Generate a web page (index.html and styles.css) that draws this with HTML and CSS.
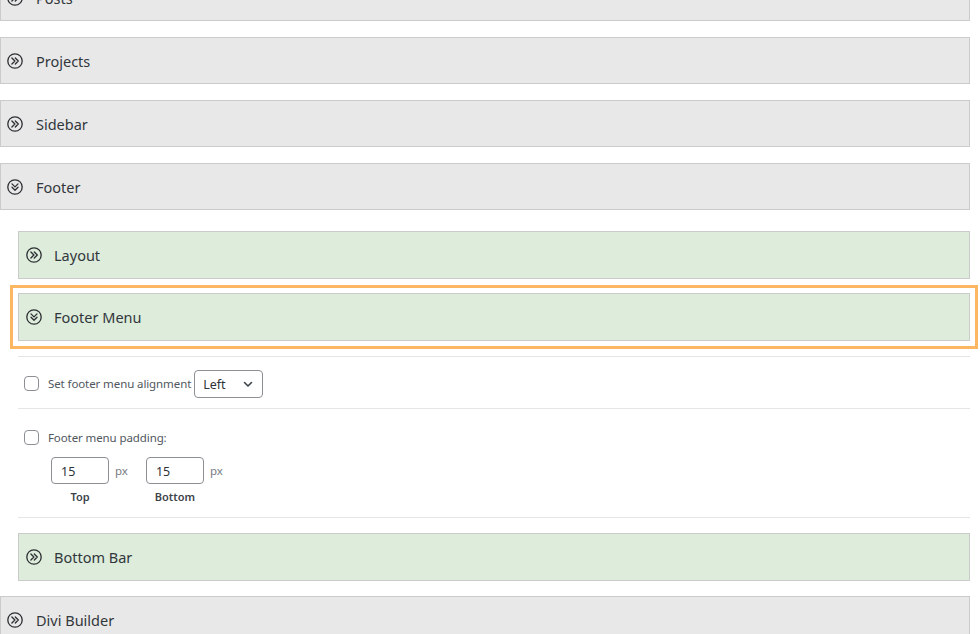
FILE: index.html
```html
<!DOCTYPE html>
<html>
<head>
<meta charset="utf-8">
<link rel="stylesheet" href="styles.css">
</head>
<body>
<div class="wrap">
  <div class="box gray"><svg class="ico" viewBox="0 0 18 18"><circle cx="9" cy="9" r="7.2"/><path d="M5.9 6 8.9 9 5.9 12M9.3 6 12.3 9 9.3 12"/></svg><span>Posts</span></div>
  <div class="box gray"><svg class="ico" viewBox="0 0 18 18"><circle cx="9" cy="9" r="7.2"/><path d="M5.9 6 8.9 9 5.9 12M9.3 6 12.3 9 9.3 12"/></svg><span>Projects</span></div>
  <div class="box gray"><svg class="ico" viewBox="0 0 18 18"><circle cx="9" cy="9" r="7.2"/><path d="M5.9 6 8.9 9 5.9 12M9.3 6 12.3 9 9.3 12"/></svg><span>Sidebar</span></div>
  <div class="box gray open"><svg class="ico" viewBox="0 0 18 18"><circle cx="9" cy="9" r="7.2"/><path d="M6 5.9 9 8.9 12 5.9M6 9.3 9 12.3 12 9.3"/></svg><span>Footer</span></div>
  <div class="children">
    <div class="box green"><svg class="ico" viewBox="0 0 18 18"><circle cx="9" cy="9" r="7.2"/><path d="M5.9 6 8.9 9 5.9 12M9.3 6 12.3 9 9.3 12"/></svg><span>Layout</span></div>
    <div class="box green focus"><svg class="ico" viewBox="0 0 18 18"><circle cx="9" cy="9" r="7.2"/><path d="M6 5.9 9 8.9 12 5.9M6 9.3 9 12.3 12 9.3"/></svg><span>Footer Menu</span></div>
    <div class="options">
      <div class="opt row1">
        <input type="checkbox" class="cb">
        <span class="lbl">Set footer menu alignment</span>
        <div class="selwrap">
          <select class="sel"><option>Left</option></select>
          <svg class="chev" viewBox="0 0 12 12"><path d="M2.5 4.5 6 8 9.5 4.5"/></svg>
        </div>
      </div>
      <div class="opt row2">
        <div class="line">
          <input type="checkbox" class="cb">
          <span class="lbl">Footer menu padding:</span>
        </div>
        <div class="fields">
          <div class="field">
            <div class="inrow"><input type="text" class="num" value="15"><span class="unit">px</span></div>
            <div class="cap">Top</div>
          </div>
          <div class="field">
            <div class="inrow"><input type="text" class="num" value="15"><span class="unit">px</span></div>
            <div class="cap">Bottom</div>
          </div>
        </div>
      </div>
    </div>
    <div class="box green last"><svg class="ico" viewBox="0 0 18 18"><circle cx="9" cy="9" r="7.2"/><path d="M5.9 6 8.9 9 5.9 12M9.3 6 12.3 9 9.3 12"/></svg><span>Bottom Bar</span></div>
  </div>
  <div class="box gray"><svg class="ico" viewBox="0 0 18 18"><circle cx="9" cy="9" r="7.2"/><path d="M5.9 6 8.9 9 5.9 12M9.3 6 12.3 9 9.3 12"/></svg><span>Divi Builder</span></div>
</div>
</body>
</html>
```

FILE: styles.css
```css
html, body {
  margin: 0;
  padding: 0;
  background: #ffffff;
  overflow: hidden;
}
body {
  font-family: "Noto Sans", "Open Sans", "Liberation Sans", sans-serif;
  color: #32373c;
}
.wrap {
  width: 970px;
  margin-top: -26px;
}
.box {
  box-sizing: border-box;
  height: 47px;
  border: 1px solid #cbcbcb;
  display: flex;
  align-items: center;
  padding-left: 5px;
  margin-bottom: 16px;
  font-size: 14.5px;
  color: #32373c;
}
.box span {
  margin-left: 12px;
}
.gray {
  background: #e8e8e8;
}
.green {
  background: #ddecdb;
  height: 48px;
  margin-bottom: 14px;
}
.box.open {
  margin-bottom: 21px;
}
.ico {
  width: 18px;
  height: 18px;
  flex: none;
  fill: none;
  stroke: #2c2f33;
  stroke-width: 1.3;
  stroke-linecap: round;
  stroke-linejoin: round;
}
.children {
  margin-left: 18px;
}
.children .box {
  padding-left: 6px;
}
.children .box span {
  margin-left: 11px;
}
.children .box.last {
  margin-bottom: 15px;
}
.focus {
  outline: 3px solid #fdb762;
  outline-offset: 5px;
  margin-bottom: 15px;
}
.options {
  border-top: 1px solid #e6e6e6;
  margin-bottom: 15px;
}
.opt {
  border-bottom: 1px solid #e6e6e6;
  padding-left: 6px;
  font-size: 11.5px;
  color: #50575e;
}
.row1 {
  display: flex;
  align-items: center;
  height: 52px;
  box-sizing: border-box;
  padding-top: 2px;
}
.cb {
  appearance: none;
  -webkit-appearance: none;
  width: 15px;
  height: 15px;
  margin: 0 9px 0 0;
  border: 1px solid #8c8f94;
  border-radius: 4px;
  background: #fff;
  box-sizing: border-box;
  flex: none;
}
.lbl {
  white-space: nowrap;
  letter-spacing: -0.1px;
}
.selwrap {
  position: relative;
  margin-left: 3px;
}
.sel {
  appearance: none;
  -webkit-appearance: none;
  width: 69px;
  height: 28px;
  box-sizing: border-box;
  border: 1px solid #8c8f94;
  border-radius: 4px;
  background: #fff;
  font-family: inherit;
  font-size: 12.5px;
  color: #2c3338;
  padding: 2px 0 0 8px;
  margin: 0;
}
.chev {
  position: absolute;
  right: 9px;
  top: 8px;
  width: 12px;
  height: 12px;
  fill: none;
  stroke: #3c434a;
  stroke-width: 1.6;
  stroke-linecap: round;
  stroke-linejoin: round;
}
.row2 {
  padding-top: 20px;
  padding-bottom: 12px;
}
.line {
  display: flex;
  align-items: center;
  height: 16px;
}
.fields {
  display: flex;
  gap: 18px;
  margin-top: 12px;
  padding-left: 27px;
}
.field {
  display: flex;
  flex-direction: column;
}
.inrow {
  display: flex;
  align-items: center;
}
.num {
  width: 58px;
  height: 27px;
  box-sizing: border-box;
  border: 1px solid #8c8f94;
  border-radius: 4px;
  font-family: inherit;
  font-size: 12.5px;
  color: #2c3338;
  padding: 1px 0 0 9px;
  margin: 0;
  background: #fff;
}
.unit {
  margin-left: 6px;
  color: #787c82;
  font-size: 11.5px;
}
.cap {
  width: 58px;
  text-align: center;
  font-weight: 600;
  font-size: 11px;
  color: #3c434a;
  margin-top: 5px;
  line-height: 16px;
}
```
